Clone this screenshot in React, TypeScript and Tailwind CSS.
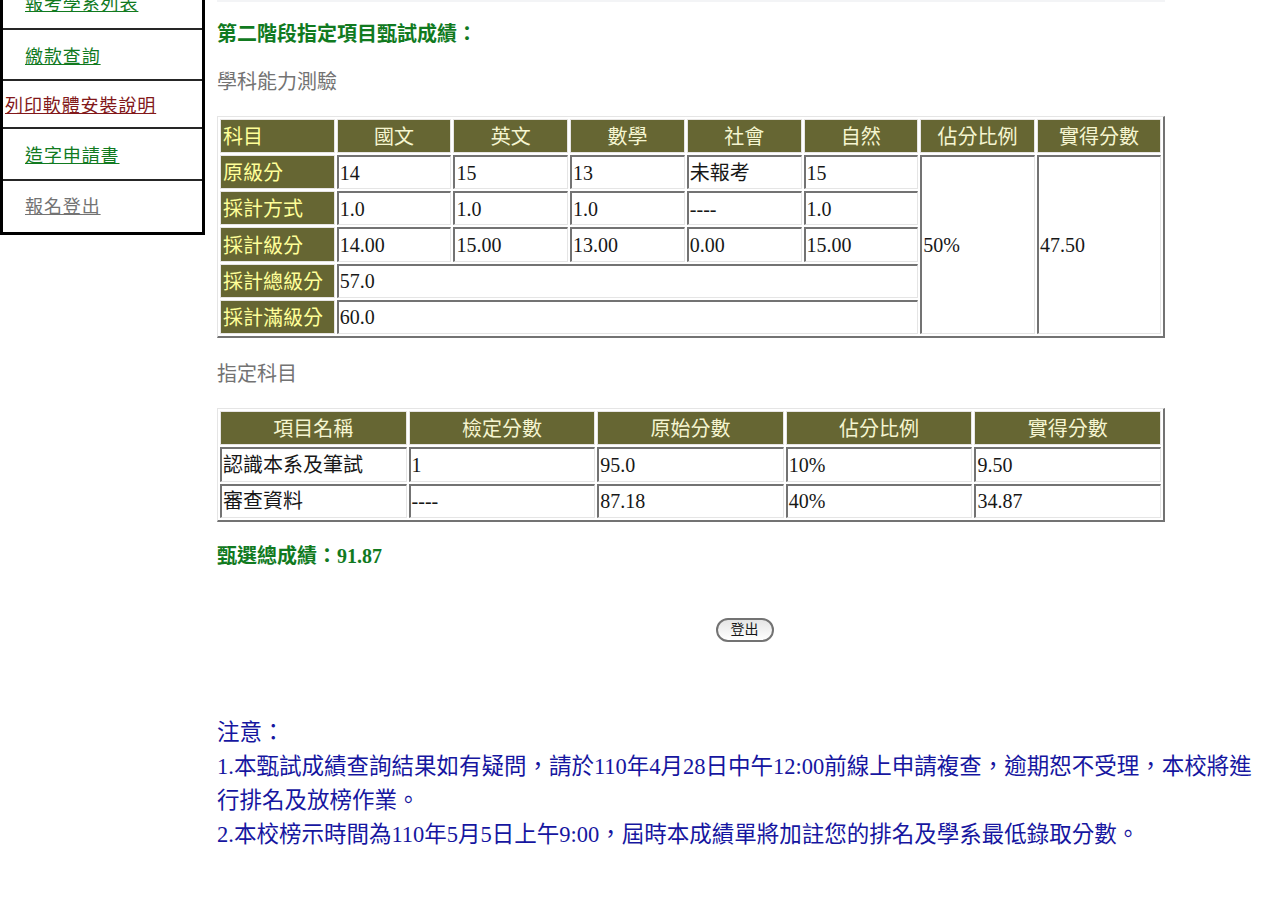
import React from "react";

const font = "font-['Liberation_Serif','Noto_Sans_CJK_TC',serif]";
const green = "text-[#117a1f]";
const th = "h-8.5 border border-stone-200 bg-[#666633] px-0 pt-0.5 text-center text-xl font-normal text-[#f5f5d0]";
const rh = "h-8.5 border border-stone-200 bg-[#666633] pt-0.5 pl-0.5 text-left text-xl font-normal text-[#ffff99]";
const td = "h-8.5 border-2 border-r border-b border-neutral-200 border-t-neutral-500 border-l-neutral-500 pl-px text-left text-xl font-normal text-neutral-900";
const tableCls = "w-full table-fixed border-separate border-spacing-0.5 border border-r-2 border-b-2 border-neutral-200 border-r-neutral-500 border-b-neutral-500";

const menu = [
  { t: "報考學系列表", c: green, h: "h-13 pt-0.5 pl-5.5" },
  { t: "繳款查詢", c: green, h: "h-12.75 pt-1 pl-5.5" },
  { t: "列印軟體安裝說明", c: "text-red-900", h: "h-12 pt-1 pl-0.5" },
  { t: "造字申請書", c: green, h: "h-13 pt-1 pl-5.5" },
  { t: "報名登出", c: "text-neutral-500", h: "h-12.75 pl-5.5" },
];

function Row({ head, cells }: { head: string; cells: string[] }) {
  return (
    <tr>
      <th className={rh}>{head}</th>
      {cells.map((c, i) => (
        <td key={i} className={td}>{c}</td>
      ))}
    </tr>
  );
}

export default function App() {
  return (
    <div className={`${font} flex h-[902px] items-start gap-3 overflow-hidden bg-white`}>
      <nav className="-mt-5.5 w-[205px] shrink-0 border-3 border-t-0 border-black bg-white">
        {menu.map((m, i) => (
          <div key={m.t} className={`flex items-center ${m.h} ${i < menu.length - 1 ? "border-b-2 border-neutral-800" : ""}`}>
            <a href="#" className={`text-lg tracking-wider underline ${m.c}`}>{m.t}</a>
          </div>
        ))}
      </nav>

      <main className="min-w-0 flex-1 pr-2">
        <div className="h-0.5 w-[948px] bg-gray-100" />
        <h2 className={`mt-4.5 text-xl leading-7 font-bold ${green}`}>第二階段指定項目甄試成績：</h2>
        <h3 className="mt-4.5 text-xl leading-8 font-normal text-neutral-500">學科能力測驗</h3>

        <div className="mt-4.5 w-[948px]">
          <table className={`${tableCls} h-55.5`}>
            <tbody>
              <tr>
                <th className={rh}>科目</th>
                {["國文", "英文", "數學", "社會", "自然", "佔分比例"].map((h) => (
                  <th key={h} className={th}>{h}</th>
                ))}
                <th className={`${th} w-31`}>實得分數</th>
              </tr>
              <tr>
                <th className={rh}>原級分</th>
                {["14", "15", "13", "未報考", "15"].map((c, i) => (
                  <td key={i} className={td}>{c}</td>
                ))}
                <td rowSpan={5} className={td}>50%</td>
                <td rowSpan={5} className={td}>47.50</td>
              </tr>
              <Row head="採計方式" cells={["1.0", "1.0", "1.0", "----", "1.0"]} />
              <Row head="採計級分" cells={["14.00", "15.00", "13.00", "0.00", "15.00"]} />
              <tr>
                <th className={rh}>採計總級分</th>
                <td colSpan={5} className={td}>57.0</td>
              </tr>
              <tr>
                <th className={rh}>採計滿級分</th>
                <td colSpan={5} className={td}>60.0</td>
              </tr>
            </tbody>
          </table>
        </div>

        <h3 className="mt-5 text-xl leading-8 font-normal text-neutral-500">指定科目</h3>

        <div className="mt-4.5 w-[948px]">
          <table className={`${tableCls} h-28.5`}>
            <tbody>
              <tr>
                {["項目名稱", "檢定分數", "原始分數", "佔分比例", "實得分數"].map((h) => (
                  <th key={h} className={th}>{h}</th>
                ))}
              </tr>
              <tr>
                {["認識本系及筆試", "1", "95.0", "10%", "9.50"].map((c, i) => (
                  <td key={i} className={td}>{c}</td>
                ))}
              </tr>
              <tr>
                {["審查資料", "----", "87.18", "40%", "34.87"].map((c, i) => (
                  <td key={i} className={td}>{c}</td>
                ))}
              </tr>
            </tbody>
          </table>
        </div>

        <p className={`mt-5 text-xl leading-7 font-bold ${green}`}>甄選總成績：91.87</p>

        <div className="mt-12 flex justify-center">
          <button className="h-6 w-14.5 rounded-full border-2 border-neutral-500 bg-gradient-to-b from-neutral-200 to-white text-sm text-neutral-900">登出</button>
        </div>

        <div className="mt-18.5 pr-4 text-[22.5px] leading-[34px] text-[#1616a0]">
          <p>注意：</p>
          <p>1.本甄試成績查詢結果如有疑問，請於110年4月28日中午12:00前線上申請複查，逾期恕不受理，本校將進行排名及放榜作業。</p>
          <p>2.本校榜示時間為110年5月5日上午9:00，屆時本成績單將加註您的排名及學系最低錄取分數。</p>
        </div>
      </main>
    </div>
  );
}
